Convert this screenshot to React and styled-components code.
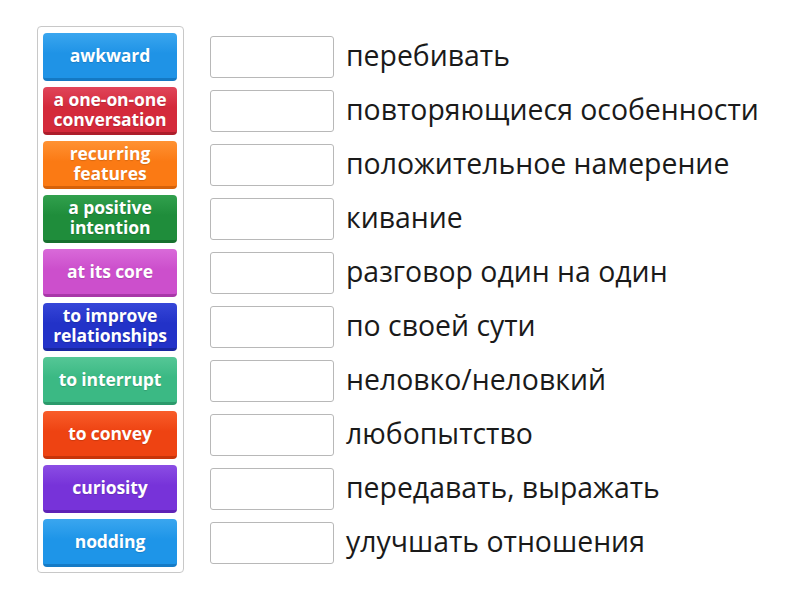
import React from 'react'
import styled, { createGlobalStyle } from 'styled-components'

const GlobalStyle = createGlobalStyle`
  body {
    margin: 0;
    background: #fff;
    font-family: "Open Sans", "Noto Sans", sans-serif;
  }
`

const Page = styled.div`
  display: flex;
  align-items: flex-start;
  gap: 26px;
  padding: 26px 0 0 37px;
`

const TilePanel = styled.div`
  display: flex;
  flex-direction: column;
  gap: 6px;
  width: 134px;
  padding: 6px 6px 5px 5px;
  border: 1px solid #c8c8c8;
  border-radius: 4px;
`

const Tile = styled.div`
  height: 48px;
  box-sizing: border-box;
  display: flex;
  align-items: center;
  justify-content: center;
  text-align: center;
  padding: 0 0 2px;
  border-radius: 4px;
  background: linear-gradient(to bottom, ${p => p.$light} 0%, ${p => p.$color} 45%, ${p => p.$color} 100%);
  border-bottom: 3px solid ${p => p.$dark};
  color: #fff;
  font-weight: 700;
  font-size: 17.5px;
  letter-spacing: -0.1px;
  line-height: 20px;
  text-shadow: 0 1px 1px rgba(0, 0, 0, 0.15);
`

const Answers = styled.div`
  display: flex;
  flex-direction: column;
  padding-top: 4px;
`

const Row = styled.div`
  height: 54px;
  display: flex;
  align-items: center;
`

const Slot = styled.div`
  width: 124px;
  height: 42px;
  box-sizing: border-box;
  border: 1px solid #b8b8b8;
  border-radius: 3px;
  background: #fff;
`

const Label = styled.span`
  margin: 0 0 5px 12px;
  font-size: 28.4px;
  color: #1a1a1a;
  white-space: nowrap;
`

const tiles = [
  { text: 'awkward', color: '#1f93e6', light: '#3aa6ef', dark: '#1479c4' },
  { text: 'a one-on-one conversation', color: '#d42a3b', light: '#e0455a', dark: '#ad1d2b' },
  { text: 'recurring features', color: '#fb7a14', light: '#ff9233', dark: '#d6620a' },
  { text: 'a positive intention', color: '#1f8d3b', light: '#31a04d', dark: '#16702d' },
  { text: 'at its core', color: '#cc4fcc', light: '#d96ad9', dark: '#a837a8' },
  { text: 'to improve relationships', color: '#2232c8', light: '#3646d8', dark: '#1826a0' },
  { text: 'to interrupt', color: '#3bb984', light: '#55c796', dark: '#2b9a6b' },
  { text: 'to convey', color: '#ee4312', light: '#f85d2a', dark: '#c7340a' },
  { text: 'curiosity', color: '#7733d9', light: '#8b4de4', dark: '#5e22b6' },
  { text: 'nodding', color: '#1e95e8', light: '#3aa6ef', dark: '#157bc6' },
]

const answers = [
  'перебивать',
  'повторяющиеся особенности',
  'положительное намерение',
  'кивание',
  'разговор один на один',
  'по своей сути',
  'неловко/неловкий',
  'любопытство',
  'передавать, выражать',
  'улучшать отношения',
]

export default function App() {
  return (
    <>
      <GlobalStyle />
      <Page>
        <TilePanel>
          {tiles.map(t => (
            <Tile key={t.text} $color={t.color} $light={t.light} $dark={t.dark}>
              {t.text}
            </Tile>
          ))}
        </TilePanel>
        <Answers>
          {answers.map(a => (
            <Row key={a}>
              <Slot />
              <Label>{a}</Label>
            </Row>
          ))}
        </Answers>
      </Page>
    </>
  )
}
